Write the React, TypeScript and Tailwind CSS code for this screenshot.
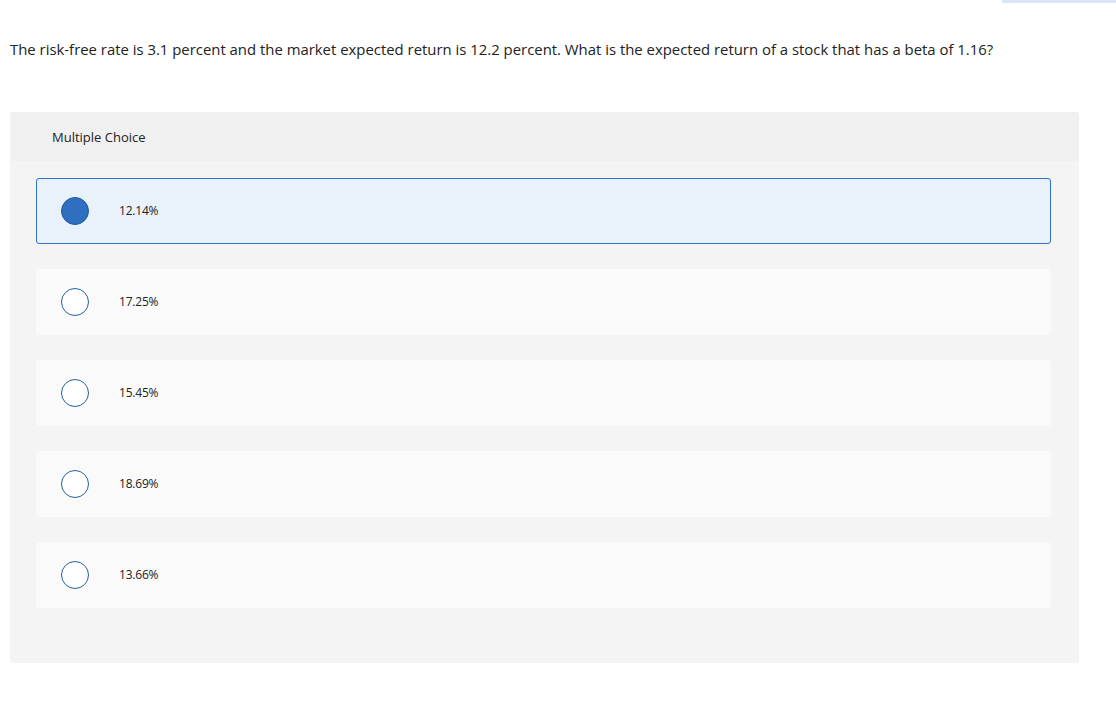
import React, { useState } from 'react';

const CHOICES = ['12.14%', '17.25%', '15.45%', '18.69%', '13.66%'];

const App: React.FC = () => {
  const [selected, setSelected] = useState(0);

  return (
    <div className="relative w-[1116px] h-[715px] bg-white font-['Open_Sans',sans-serif] text-[#222]">
      <div className="absolute top-0 right-0 w-[114px] h-[3px] bg-[#d8e6f6]" />

      <div className="pt-[39px] pl-[10px]">
        <p className="text-[14.9px] leading-[20px]">
          The risk-free rate is 3.1 percent and the market expected return is 12.2 percent. What is the expected return of a stock that has a beta of 1.16?
        </p>

        <div className="mt-[53px] w-[1069px] h-[551px] bg-[#f4f4f4] rounded-[3px] overflow-hidden">
          <div className="h-[49px] bg-[#f0f0f0] flex items-center pl-[42px] pt-[3px] text-[13px] text-[#222]">
            Multiple Choice
          </div>

          <div className="flex flex-col gap-[25px] pt-[17px] pl-[26px] pr-[28px]">
            {CHOICES.map((c, i) => {
              const active = selected === i;
              return (
                <div
                  key={c}
                  onClick={() => setSelected(i)}
                  className={`h-[66px] flex items-center pl-[24px] rounded-[3px] cursor-pointer border ${
                    active ? 'bg-[#e9f2fb] border-[#2e72c9]' : 'bg-[#fafafa] border-[#fafafa]'
                  }`}
                >
                  <span
                    className={`block w-[28px] h-[28px] rounded-full shrink-0 ${
                      active ? 'bg-[#2e6fbf] border border-[#1f5a9f]' : 'bg-white border-[1.5px] border-[#22609f]'
                    }`}
                  />
                  <span className="ml-[30px] text-[12px] tracking-[-0.2px] text-[#222]">{c}</span>
                </div>
              );
            })}
          </div>
        </div>
      </div>
    </div>
  );
};

export default App;
